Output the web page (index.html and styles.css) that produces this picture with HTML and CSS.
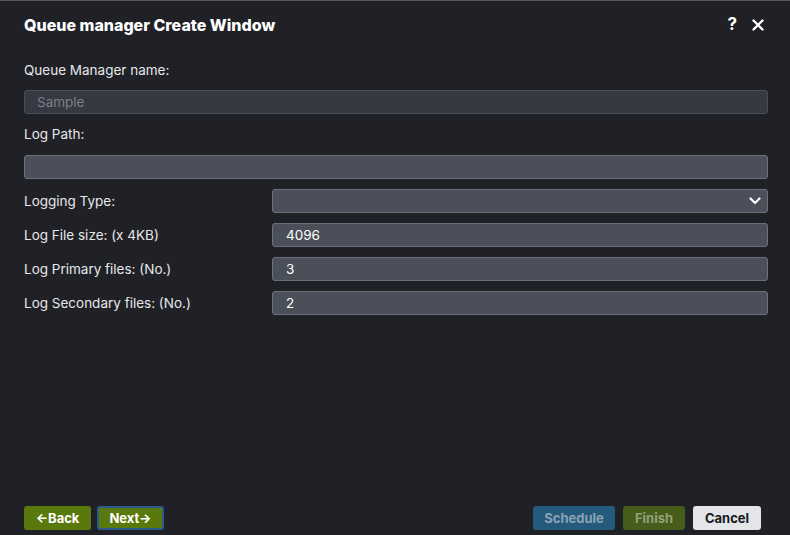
FILE: index.html
```html
<!DOCTYPE html>
<html>
<head>
<meta charset="utf-8">
<link rel="stylesheet" href="styles.css">
</head>
<body>
<div class="dialog">
  <div class="header">
    <h1 class="title">Queue manager Create Window</h1>
    <div class="header-icons">
      <span class="help">?</span>
      <svg class="close" width="12" height="12" viewBox="0 0 12 12"><path d="M1.5 1.5 L10.5 10.5 M10.5 1.5 L1.5 10.5" stroke="#fff" stroke-width="2.4" stroke-linecap="round"/></svg>
    </div>
  </div>
  <div class="content">
    <div class="label top-label">Queue Manager name:</div>
    <div class="input disabled">Sample</div>
    <div class="label top-label second">Log Path:</div>
    <div class="input wide"></div>
    <div class="grid">
      <div class="label">Logging Type:</div>
      <div class="input select">
        <svg width="12" height="8" viewBox="0 0 12 8"><path d="M1.5 1.5 L6 6 L10.5 1.5" stroke="#fff" stroke-width="2.2" fill="none" stroke-linecap="round" stroke-linejoin="round"/></svg>
      </div>
      <div class="label">Log File size: (x 4KB)</div>
      <div class="input">4096</div>
      <div class="label">Log Primary files: (No.)</div>
      <div class="input">3</div>
      <div class="label">Log Secondary files: (No.)</div>
      <div class="input">2</div>
    </div>
  </div>
  <div class="footer">
    <div class="group">
      <button class="btn green">&larr;Back</button>
      <button class="btn green focused">Next&rarr;</button>
    </div>
    <div class="group right">
      <button class="btn blue-dis">Schedule</button>
      <button class="btn green-dis">Finish</button>
      <button class="btn light">Cancel</button>
    </div>
  </div>
</div>
</body>
</html>
```
FILE: styles.css
```css
* { box-sizing: border-box; }
html, body {
  margin: 0;
  padding: 0;
  background: #202127;
}
body {
  font-family: "Inter", "Lato", "Liberation Sans", sans-serif;
  color: #e8e9ec;
  width: 790px;
  height: 535px;
  overflow: hidden;
}
.dialog {
  height: 535px;
  border-top: 1px solid #58595d;
  display: flex;
  flex-direction: column;
}
.header {
  height: 47px;
  display: flex;
  align-items: center;
  justify-content: space-between;
  padding: 0 26px 0 24px;
}
.title {
  margin: 0;
  font-size: 16px;
  font-weight: 800;
  color: #ffffff;
  letter-spacing: 0;
}
.header-icons {
  display: flex;
  align-items: center;
  gap: 15px;
}
.help {
  font-size: 17px;
  font-weight: 700;
  color: #fff;
  line-height: 1;
}
.content {
  padding: 0 22px 0 24px;
}
.label {
  font-size: 13.5px;
  line-height: 20px;
  color: #e6e7ea;
}
.top-label {
  margin-top: 12px;
  margin-bottom: 10px;
}
.top-label.second {
  margin-top: 10px;
  margin-bottom: 11px;
}
.input {
  height: 24px;
  border: 1px solid #6b717d;
  border-radius: 3px;
  background: #4a4f59;
  color: #ffffff;
  font-size: 13.5px;
  line-height: 22px;
  padding: 0 13px;
}
.input.disabled {
  background: #363842;
  border-color: #4a4d57;
  color: #7d808a;
  padding: 0 12px;
}
.grid {
  margin-top: 10px;
  display: grid;
  grid-template-columns: 248px 1fr;
  row-gap: 10px;
  align-items: center;
}
.select {
  display: flex;
  align-items: center;
  justify-content: flex-end;
  padding-right: 6px;
}
.footer {
  margin-top: auto;
  padding: 0 29px 5px 24px;
  display: flex;
  justify-content: space-between;
  align-items: flex-end;
}
.group {
  display: flex;
  gap: 6px;
}
.group.right {
  gap: 8px;
}
.btn {
  font-family: inherit;
  height: 24px;
  border: none;
  border-radius: 3px;
  font-size: 13px;
  font-weight: 700;
  padding: 0 8px;
  cursor: pointer;
}
.green {
  background: #5a790c;
  color: #ffffff;
  width: 67px;
}
.focused {
  border: 2px solid #2b5a8c;
}
.blue-dis {
  background: #245a7c;
  color: #8aa3b4;
  width: 82px;
}
.green-dis {
  background: #465c1b;
  color: #93a17a;
  width: 62px;
}
.light {
  background: #e3e5e9;
  color: #15171c;
  width: 68px;
}
```
